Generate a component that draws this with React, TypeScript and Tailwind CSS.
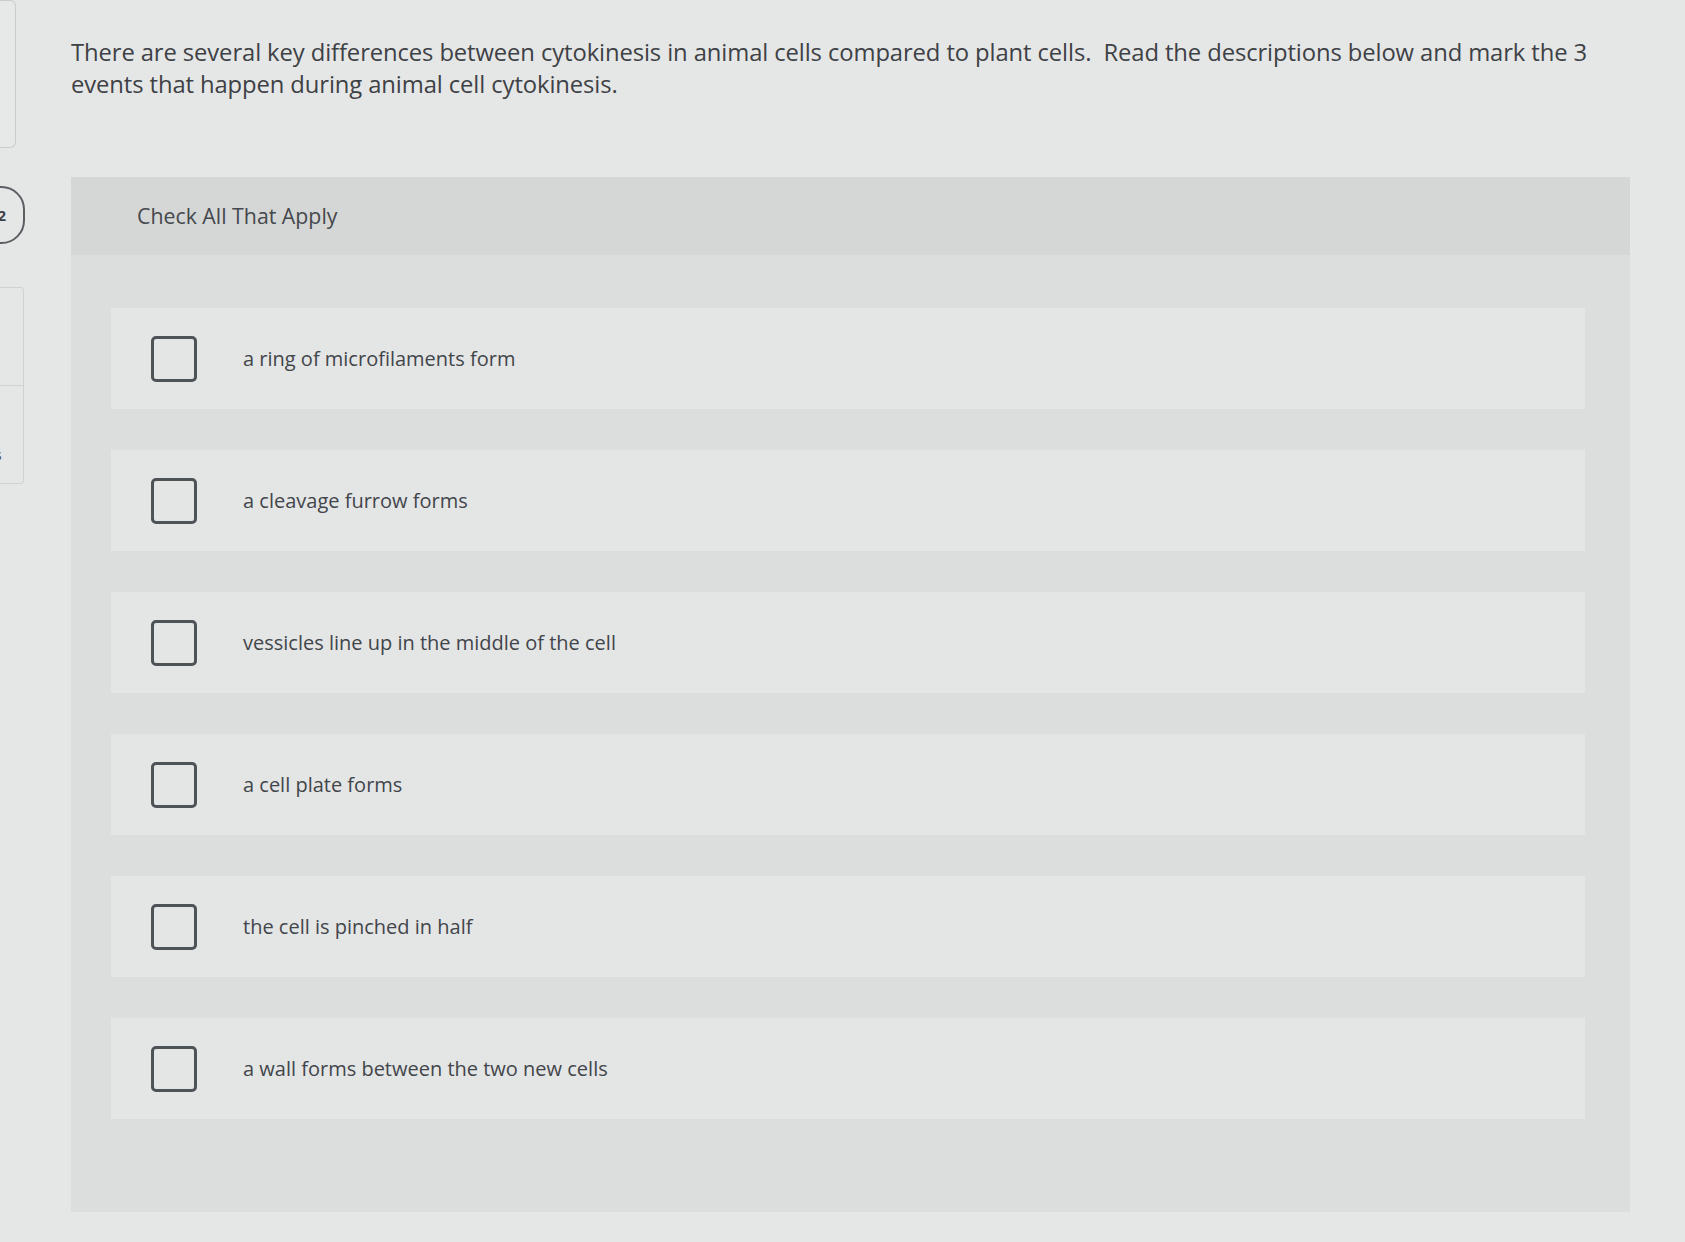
import React from "react";

const options = [
  "a ring of microfilaments form",
  "a cleavage furrow forms",
  "vessicles line up in the middle of the cell",
  "a cell plate forms",
  "the cell is pinched in half",
  "a wall forms between the two new cells",
];

export default function App() {
  return (
    <div
      className="w-[1685px] h-[1242px] bg-[#e5e7e7] flex overflow-hidden text-[#45484c]"
      style={{ fontFamily: "'Open Sans', Lato, sans-serif" }}
    >
      {/* left sidebar strip (clipped) */}
      <div className="w-[26px] shrink-0 overflow-hidden flex flex-col">
        <div className="w-[16px] h-[148px] border border-l-0 border-[#c9cbcc] rounded-r-[6px] bg-[#e7e9e9]" />
        <div className="mt-[38px] -ml-[22px] w-[47px] h-[58px] rounded-full border-2 border-[#5b5f63] flex items-center justify-end pr-[17px] text-[15px] font-bold text-[#3d4044]">
          2
        </div>
        <div className="mt-[43px] w-[24px] h-[197px] border border-l-0 border-[#cfd1d2] rounded-r-[4px] flex flex-col">
          <div className="h-[98px] border-b border-[#cfd1d2]" />
          <div className="flex-1 flex items-center pt-[40px] text-[14px] -ml-[5px] text-[#4a4d51]">
            s
          </div>
        </div>
      </div>

      <div className="flex-1 flex flex-col pl-[45px] pr-[55px]">
        <p className="pt-[36px] text-[23.8px] leading-[32px] text-[#3e4145] pr-[10px] tracking-[-0.1px]">
          There are several key differences between cytokinesis in animal cells compared to plant cells.&nbsp; Read the descriptions below and mark the 3 events that happen during animal cell cytokinesis.
        </p>

        <div className="mt-[77px] bg-[#dcdede] h-[1035px] flex flex-col">
          <div className="h-[78px] bg-[#d5d7d7] flex items-center pl-[66px] text-[21.3px] text-[#45484c]">
            Check All That Apply
          </div>
          <div className="flex flex-col gap-[41px] pt-[53px] pl-[40px] pr-[45px]">
            {options.map((o) => (
              <div
                key={o}
                className="h-[101px] bg-[#e4e6e6] flex items-center pl-[40px]"
              >
                <div className="w-[46px] h-[46px] rounded-[5px] border-[3px] border-[#4e5358] shrink-0" />
                <span className="ml-[46px] text-[20px] text-[#42454a]">{o}</span>
              </div>
            ))}
          </div>
        </div>
      </div>
    </div>
  );
}
